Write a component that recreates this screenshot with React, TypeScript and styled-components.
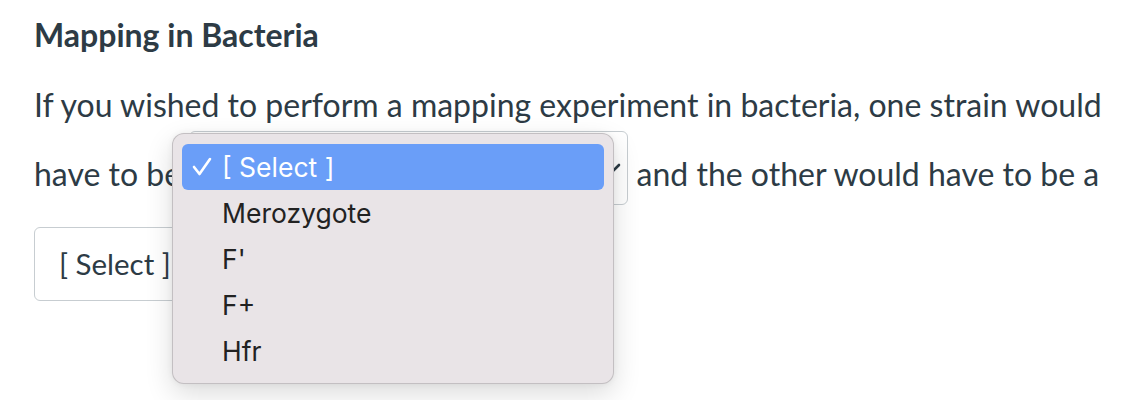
import React from 'react';
import styled, { createGlobalStyle } from 'styled-components';

const GlobalStyle = createGlobalStyle`
    html, body {
        margin: 0;
        padding: 0;
        background: #ffffff;
    }
    body {
        font-family: Lato, "Liberation Sans", sans-serif;
        color: #2d3b45;
    }
`;

const Page = styled.div`
    position: relative;
    width: 1148px;
    height: 400px;
    padding: 0 40px 0 34px;
    box-sizing: border-box;
    overflow: hidden;
`;

const Title = styled.h2`
    margin: 0;
    padding-top: 15px;
    font-size: 32px;
    line-height: 40px;
    font-weight: 700;
`;

const Question = styled.p`
    margin: 29px 0 0;
    font-size: 32px;
    line-height: 42px;
`;

const SelectBox = styled.span<{ $width: number }>`
    position: relative;
    display: inline-block;
    box-sizing: border-box;
    width: ${p => p.$width}px;
    height: 74px;
    margin: 5px 0 17px;
    padding: 0 24px;
    font-size: 29.5px;
    line-height: 72px;
    border: 1px solid #c7cdd1;
    border-radius: 6px;
    background: #ffffff;
    color: #2d3b45;
    vertical-align: 7px;
`;

const Chevron = styled.svg`
    position: absolute;
    right: 6px;
    top: 31px;
`;

const Popup = styled.div`
    position: absolute;
    left: 172px;
    top: 133px;
    width: 442px;
    height: 251px;
    box-sizing: border-box;
    padding: 10px 9px;
    background: #e9e4e7;
    border: 1px solid rgba(0, 0, 0, 0.16);
    border-radius: 12px;
    box-shadow: 0 10px 28px rgba(0, 0, 0, 0.14), 0 0 6px rgba(0, 0, 0, 0.06);
    font-family: Inter, "Noto Sans", sans-serif;
`;

const Option = styled.div<{ $active?: boolean }>`
    display: flex;
    align-items: center;
    height: 46px;
    padding-left: 10px;
    border-radius: 6px;
    font-size: 26.5px;
    color: ${p => (p.$active ? '#ffffff' : '#222222')};
    background: ${p => (p.$active ? '#6a9ef8' : 'transparent')};
`;

const CheckSlot = styled.span`
    display: inline-flex;
    width: 30px;
    align-items: center;
`;

const options = ['[ Select ]', 'Merozygote', "F'", 'F+', 'Hfr'];

const App: React.FC = () => {
    return (
        <>
            <GlobalStyle />
            <Page>
                <Title>Mapping in Bacteria</Title>
                <Question>
                    If you wished to perform a mapping experiment in bacteria, one strain would have to be{' '}
                    <SelectBox $width={439}>
                        [ Select ]
                        <Chevron width="20" height="12" viewBox="0 0 20 12">
                            <path d="M2 2 L10 10 L18 2" fill="none" stroke="#2d3b45" strokeWidth="2.6" strokeLinecap="round" />
                        </Chevron>
                    </SelectBox>{' '}
                    and the other would have to be a{' '}
                    <SelectBox $width={300}>[ Select ]</SelectBox>
                </Question>

                <Popup>
                    {options.map((o, i) => (
                        <Option key={o} $active={i === 0}>
                            <CheckSlot>
                                {i === 0 && (
                                    <svg width="20" height="20" viewBox="0 0 20 20">
                                        <path d="M2 10 L7.5 17 L18 2" fill="none" stroke="#ffffff" strokeWidth="2.6" strokeLinecap="round" strokeLinejoin="round" />
                                    </svg>
                                )}
                            </CheckSlot>
                            {o}
                        </Option>
                    ))}
                </Popup>
            </Page>
        </>
    );
};

export default App;
